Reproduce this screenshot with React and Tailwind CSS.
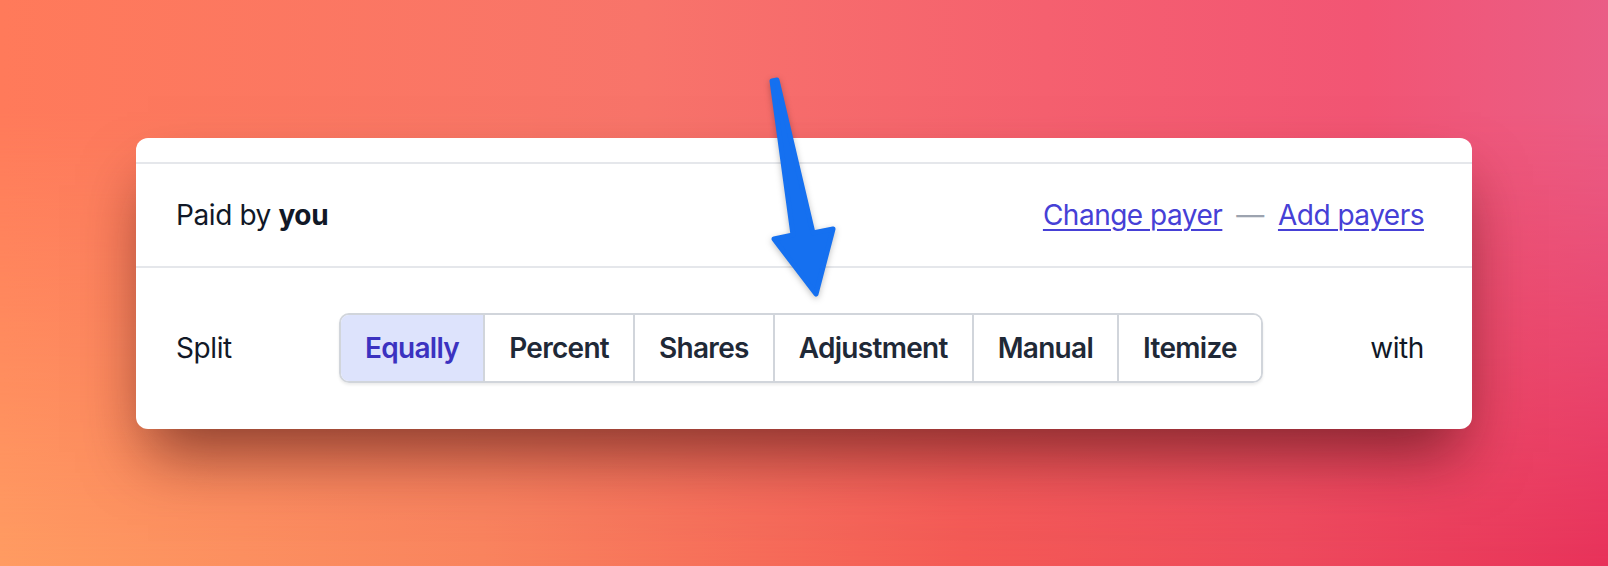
import React from "react";

const options = ["Equally", "Percent", "Shares", "Adjustment", "Manual", "Itemize"];

export default function App() {
  return (
    <div className="relative h-[566px] w-[1608px] overflow-hidden bg-[linear-gradient(to_right,#ff9c62_0%,#f9845e_30%,#f45a55_60%,#ee4a5c_80%,#e8325a_100%)] font-['Inter','Liberation_Sans',sans-serif]">
      <div className="absolute inset-0 bg-[linear-gradient(to_right,#ff7a5a_0%,#f8746a_40%,#f5606f_65%,#f25574_85%,#ea5d86_100%)] [mask-image:linear-gradient(to_bottom,black_0%,black_20%,transparent_100%)]" />
      <div className="relative flex h-full items-center justify-center">
        <div className="w-[1336px] rounded-xl bg-white shadow-[0_35px_60px_-12px_rgba(60,10,10,0.6)]">
          <div className="h-[24px]" />
          <div className="flex h-[106px] items-center justify-between border-t-2 border-b-2 border-[#e5e7eb] pl-10 pr-12 text-[28px] tracking-[-0.4px] text-[#111827]">
            <p>
              Paid by <span className="font-bold">you</span>
            </p>
            <div className="flex items-center gap-[14px]">
              <a href="#" className="tracking-[-0.5px] text-[#4640d6] underline decoration-2 underline-offset-[4px]">
                Change payer
              </a>
              <span className="text-[#9ca3af]">—</span>
              <a href="#" className="tracking-[-0.5px] text-[#4640d6] underline decoration-2 underline-offset-[4px]">
                Add payers
              </a>
            </div>
          </div>
          <div className="flex h-[161px] items-center pl-10 pr-12 text-[28px] tracking-[-0.4px] text-[#111827]">
            <span className="w-[163px]">Split</span>
            <div className="flex h-[70px] overflow-hidden rounded-[10px] border-2 border-[#d1d5db] shadow-[0_2px_3px_rgba(0,0,0,0.08)]">
              {options.map((o, i) => (
                <button
                  key={o}
                  className={
                    "flex items-center px-6 font-semibold tracking-[-0.7px] " +
                    (i > 0 ? "border-l-2 border-[#d1d5db] " : "") +
                    (i === 0 ? "bg-[#dde3fc] text-[#3b32c0]" : "bg-white text-[#1f2937]")
                  }
                >
                  {o}
                </button>
              ))}
            </div>
            <span className="ml-auto">with</span>
          </div>
        </div>
      </div>
      <svg
        className="pointer-events-none absolute inset-0 [filter:drop-shadow(0_2px_3px_rgba(0,0,0,0.25))]"
        width="1608"
        height="566"
        viewBox="0 0 1608 566"
      >
        <polygon
          points="772,81 793,235 774,239 816,294 833,229 813,233 777,80"
          fill="#1570f0"
          stroke="#1570f0"
          strokeWidth="5"
          strokeLinejoin="round"
        />
      </svg>
    </div>
  );
}
